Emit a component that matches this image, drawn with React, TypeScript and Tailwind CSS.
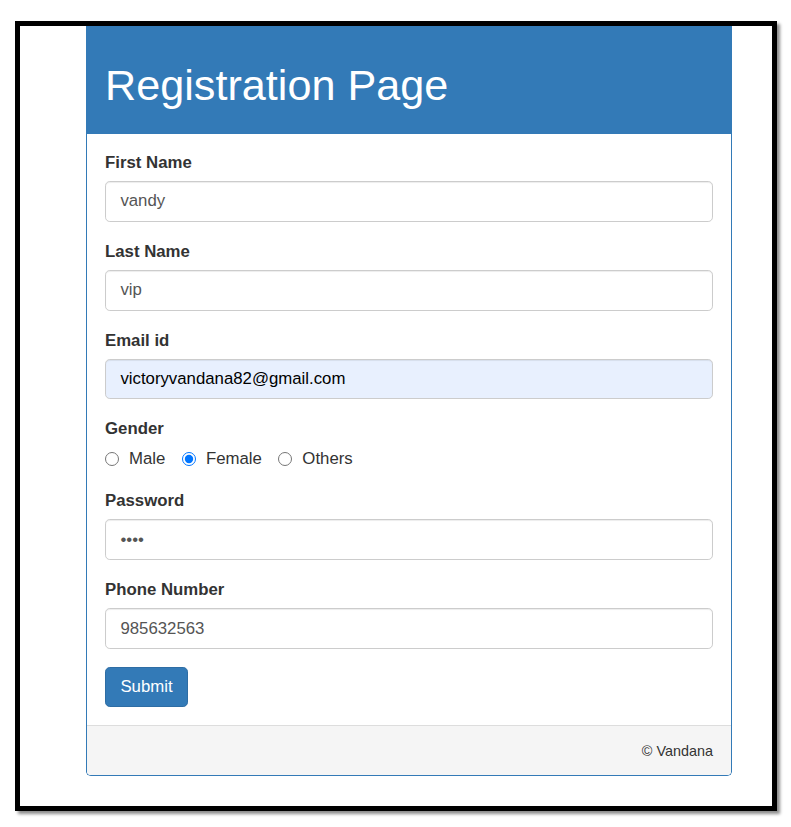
import React from "react";

const font = { fontFamily: '"Liberation Sans", Arial, Helvetica, sans-serif' };

function Field({
    label,
    value,
    autofill = false,
}: {
    label: string;
    value: string;
    autofill?: boolean;
}) {
    return (
        <div className="mb-[18px]">
            <label className="mb-[6px] block text-[16.8px] font-bold leading-[24px] text-[#333]">
                {label}
            </label>
            <input
                type="text"
                readOnly
                value={value}
                className={`block h-[40.8px] w-full rounded-[4.8px] border border-[#ccc] px-[14.4px] text-[16.8px] leading-[24px] shadow-[inset_0_1px_1px_rgba(0,0,0,0.075)] outline-none ${
                    autofill ? "bg-[#e8f0fe] text-[#000]" : "bg-white text-[#555]"
                }`}
                style={font}
            />
        </div>
    );
}

function Radio({ label, checked = false }: { label: string; checked?: boolean }) {
    return (
        <label className="inline-flex items-center text-[16.8px] leading-[24px] text-[#333]">
            <input
                type="radio"
                name="gender"
                defaultChecked={checked}
                className="m-0 h-[14px] w-[14px]"
            />
            <span className="ml-[10px]">{label}</span>
        </label>
    );
}

export default function App() {
    return (
        <div className="h-[827px] w-[791px] bg-white pl-[15px] pt-[21px]" style={font}>
            <div className="h-[790px] w-[762px] border-[5px] border-black bg-white shadow-[3px_3px_3px_rgba(0,0,0,0.45)]">
                <div className="ml-[66px] w-[646px] rounded-b-[4.8px] border border-t-0 border-[#337ab7] bg-white">
                    <div className="border-b border-[#337ab7] bg-[#337ab7] px-[18px] py-[12px]">
                        <h1 className="mb-[11px] mt-[24px] text-[43.2px] font-normal leading-[1.1] text-white">
                            Registration Page
                        </h1>
                    </div>

                    <form className="px-[18px] pb-[18px] pt-[17.5px]" onSubmit={(e) => e.preventDefault()}>
                        <Field label="First Name" value="vandy" />
                        <Field label="Last Name" value="vip" />
                        <Field label="Email id" value="victoryvandana82@gmail.com" autofill />

                        <div className="mb-[18px]">
                            <label className="mb-[6px] block text-[16.8px] font-bold leading-[24px] text-[#333]">
                                Gender
                            </label>
                            <div className="flex h-[24px] items-center gap-[16.5px]">
                                <Radio label="Male" />
                                <Radio label="Female" checked />
                                <Radio label="Others" />
                            </div>
                        </div>

                        <Field label="Password" value="••••" />
                        <Field label="Phone Number" value="985632563" />

                        <button
                            type="submit"
                            className="rounded-[4.8px] border border-[#2e6da4] bg-[#337ab7] px-[14.4px] py-[7.2px] text-[16.8px] leading-[24px] text-white"
                            style={font}
                        >
                            Submit
                        </button>
                    </form>

                    <div className="rounded-b-[4px] border-t border-[#ddd] bg-[#f5f5f5] px-[18px] py-[12.5px] text-right leading-[24px]">
                        <span className="text-[14.4px] text-[#333]">© Vandana</span>
                    </div>
                </div>
            </div>
        </div>
    );
}
